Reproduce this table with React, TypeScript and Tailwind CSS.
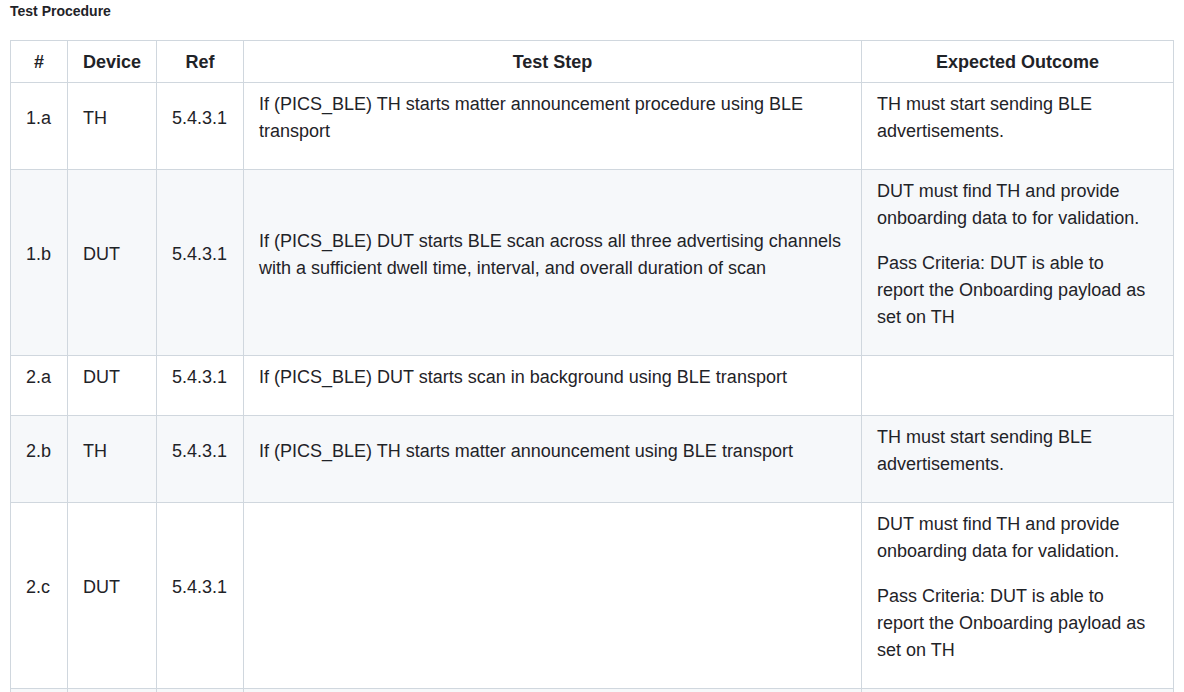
import React from "react";

type Row = {
  id: string;
  device: string;
  ref: string;
  step: string[];
  outcome: string[][];
};

const rows: Row[] = [
  {
    id: "1.a",
    device: "TH",
    ref: "5.4.3.1",
    step: ["If (PICS_BLE) TH starts matter announcement procedure using BLE", "transport"],
    outcome: [["TH must start sending BLE", "advertisements."]],
  },
  {
    id: "1.b",
    device: "DUT",
    ref: "5.4.3.1",
    step: [
      "If (PICS_BLE) DUT starts BLE scan across all three advertising channels",
      "with a sufficient dwell time, interval, and overall duration of scan",
    ],
    outcome: [
      ["DUT must find TH and provide", "onboarding data to for validation."],
      ["Pass Criteria: DUT is able to", "report the Onboarding payload as", "set on TH"],
    ],
  },
  {
    id: "2.a",
    device: "DUT",
    ref: "5.4.3.1",
    step: ["If (PICS_BLE) DUT starts scan in background using BLE transport"],
    outcome: [],
  },
  {
    id: "2.b",
    device: "TH",
    ref: "5.4.3.1",
    step: ["If (PICS_BLE) TH starts matter announcement using BLE transport"],
    outcome: [["TH must start sending BLE", "advertisements."]],
  },
  {
    id: "2.c",
    device: "DUT",
    ref: "5.4.3.1",
    step: [],
    outcome: [
      ["DUT must find TH and provide", "onboarding data for validation."],
      ["Pass Criteria: DUT is able to", "report the Onboarding payload as", "set on TH"],
    ],
  },
];

function Lines({ lines }: { lines: string[] }) {
  return (
    <p className="mb-[18px] whitespace-nowrap">
      {lines.map((l, i) => (
        <React.Fragment key={i}>
          {i > 0 && <br />}
          {l}
        </React.Fragment>
      ))}
    </p>
  );
}

const td = "border border-[#d0d7de] px-[15px] pt-[8px] pb-[6px] align-middle";

export default function App() {
  return (
    <div
      className="bg-white text-[#1f2328] px-[10px] h-[692px] overflow-hidden"
      style={{ fontFamily: '"Liberation Sans", Arial, sans-serif' }}
    >
      <div className="pt-[3px] h-[40px] text-[14px] leading-[17px] font-bold">Test Procedure</div>
      <table className="border-collapse w-[1163px] table-fixed text-[18px] leading-[27px]">
        <colgroup>
          <col className="w-[57px]" />
          <col className="w-[89px]" />
          <col className="w-[87px]" />
          <col className="w-[618px]" />
          <col className="w-[312px]" />
        </colgroup>
        <thead>
          <tr className="bg-white">
            <th className={`${td} font-bold text-center`}>#</th>
            <th className={`${td} font-bold text-center`}>Device</th>
            <th className={`${td} font-bold text-center`}>Ref</th>
            <th className={`${td} font-bold text-center`}>Test Step</th>
            <th className={`${td} font-bold text-center`}>Expected Outcome</th>
          </tr>
        </thead>
        <tbody>
          {rows.map((r, i) => (
            <tr key={r.id} className={i % 2 === 1 ? "bg-[#f6f8fa]" : "bg-white"}>
              <td className={td}>
                <Lines lines={[r.id]} />
              </td>
              <td className={td}>
                <Lines lines={[r.device]} />
              </td>
              <td className={td}>
                <Lines lines={[r.ref]} />
              </td>
              <td className={td}>{r.step.length > 0 && <Lines lines={r.step} />}</td>
              <td className={td}>
                {r.outcome.map((p, j) => (
                  <Lines key={j} lines={p} />
                ))}
              </td>
            </tr>
          ))}
          <tr className="bg-[#f6f8fa] h-[88px]">
            <td className={td}></td>
            <td className={td}></td>
            <td className={td}></td>
            <td className={td}></td>
            <td className={td}></td>
          </tr>
        </tbody>
      </table>
    </div>
  );
}
